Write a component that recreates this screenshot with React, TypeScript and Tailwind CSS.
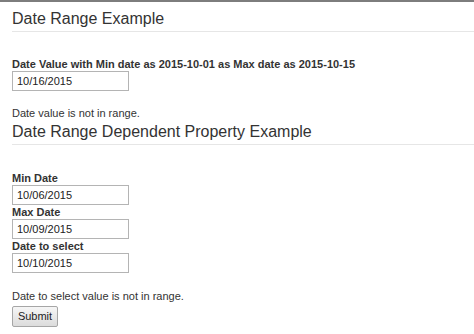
const inputCls =
  "block h-[20px] w-[117px] border border-[#b4b4b4] px-[4px] text-[11px] text-[#222] outline-none";

export default function App() {
  return (
    <div className="min-h-screen bg-white border-t-2 border-[#7d7d7d] font-['Liberation_Sans',Arial,sans-serif] text-[#333]">
      <div className="pl-3">
        <h2 className="pt-[7px] text-[16px] leading-[20px]">Date Range Example</h2>
        <div className="mt-[2px] border-b border-[#e6e6e6]" />

        <label className="mt-[25px] block text-[11px] leading-[14px] font-bold">
          Date Value with Min date as 2015-10-01 as Max date as 2015-10-15
        </label>
        <input readOnly value="10/16/2015" className={inputCls} />
        <p className="mt-[15px] text-[11px] leading-[14px]">Date value is not in range.</p>

        <h2 className="mt-[2px] text-[16px] leading-[20px]">Date Range Dependent Property Example</h2>
        <div className="mt-[2px] border-b border-[#e6e6e6]" />

        <label className="mt-[26px] block text-[11px] leading-[14px] font-bold">Min Date</label>
        <input readOnly value="10/06/2015" className={inputCls} />
        <label className="block text-[11px] leading-[14px] font-bold">Max Date</label>
        <input readOnly value="10/09/2015" className={inputCls} />
        <label className="block text-[11px] leading-[14px] font-bold">Date to select</label>
        <input readOnly value="10/10/2015" className={inputCls} />
        <p className="mt-[16px] text-[11px] leading-[14px]">Date to select value is not in range.</p>
        <button className="mt-[1px] h-[21px] w-[46px] rounded-[2px] border border-[#a6a6a6] bg-gradient-to-b from-[#f6f6f6] to-[#dcdcdc] text-[11px] text-[#222]">
          Submit
        </button>
      </div>
    </div>
  );
}
